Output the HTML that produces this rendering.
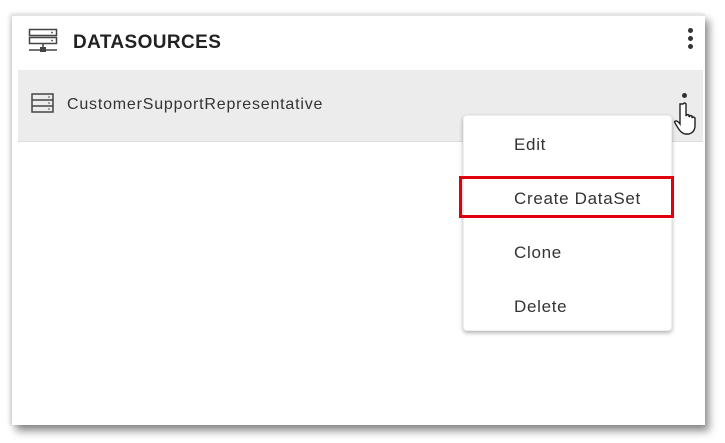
<!DOCTYPE html>
<html><head><style>
body{margin:0;width:725px;height:443px;background:#fff;position:relative;overflow:hidden;font-family:"Liberation Sans",sans-serif;}
.panel{position:absolute;left:12px;top:14px;width:693px;height:409px;background:#fff;border-top:2px solid #e4e4e4;box-shadow:4px 6px 8px rgba(0,0,0,.45),-2px 0 4px rgba(0,0,0,.15);}
.title{position:absolute;left:73px;top:32px;font-size:19px;font-weight:bold;color:#222;letter-spacing:.4px}
.row{position:absolute;left:18px;top:70px;width:685px;height:71px;background:#ececec;border-bottom:1px solid #ddd}
.rowtxt{position:absolute;left:67px;top:96px;font-size:16px;color:#333;letter-spacing:.8px}
.menu{position:absolute;left:463px;top:115px;width:209px;height:216px;background:#fff;border-radius:4px;box-shadow:0 2px 4px rgba(0,0,0,.3);border:1px solid #eee;box-sizing:border-box}
.mi{position:absolute;left:514px;font-size:17px;color:#333;letter-spacing:.7px}
.red{position:absolute;left:459px;top:176px;width:215px;height:42px;border:3px solid #e0000b;box-sizing:border-box}
.dot{position:absolute;width:5px;height:5px;border-radius:50%;background:#333}
</style></head><body>
<div class="panel"></div>
<svg style="position:absolute;left:28px;top:28px" width="30" height="27" viewBox="0 0 30 27">
<rect x="1.5" y="1.5" width="27" height="6" fill="none" stroke="#444" stroke-width="1.5"/>
<rect x="1.5" y="9.5" width="27" height="6" fill="none" stroke="#444" stroke-width="1.5"/>
<circle cx="24" cy="4.5" r="0.9" fill="#444"/><circle cx="24" cy="12.5" r="0.9" fill="#444"/>
<line x1="15" y1="16" x2="15" y2="20" stroke="#444" stroke-width="1.5"/>
<line x1="1" y1="22" x2="29" y2="22" stroke="#444" stroke-width="1.5"/>
<rect x="12" y="19" width="6" height="5" fill="#444"/>
</svg>
<div class="title">DATASOURCES</div>
<div class="dot" style="left:688px;top:28px"></div>
<div class="dot" style="left:688px;top:36px"></div>
<div class="dot" style="left:688px;top:44px"></div>
<div class="row"></div>
<svg style="position:absolute;left:31px;top:93px" width="23" height="20" viewBox="0 0 23 20">
<rect x="1" y="1" width="21" height="18" fill="none" stroke="#444" stroke-width="1.5"/>
<line x1="1" y1="7" x2="22" y2="7" stroke="#444" stroke-width="1.5"/>
<line x1="1" y1="13" x2="22" y2="13" stroke="#444" stroke-width="1.5"/>
<circle cx="18" cy="4" r=".8" fill="#444"/><circle cx="18" cy="10" r=".8" fill="#444"/><circle cx="18" cy="16" r=".8" fill="#444"/>
</svg>
<div class="rowtxt">CustomerSupportRepresentative</div>
<div class="menu"></div>
<div class="mi" style="top:135px">Edit</div>
<div class="mi" style="top:189px">Create DataSet</div>
<div class="mi" style="top:243px">Clone</div>
<div class="mi" style="top:297px">Delete</div>
<div class="red"></div>
<div class="dot" style="left:682px;top:93px"></div>
<svg style="position:absolute;left:673px;top:101px" width="28" height="34" viewBox="0 0 28 34">
<path d="M10 3 q2-2 3 0 v12 q1-2 3-1 v2 q1-2 3-1 v2 q1-2 3 0 v8 q0 6-6 8 h-4 q-4-1-7-6 l-3-5 q-1-2 1-2 q2 0 4 3 v-20 z" fill="#fff" stroke="#222" stroke-width="1.4"/>
</svg>
</body></html>
